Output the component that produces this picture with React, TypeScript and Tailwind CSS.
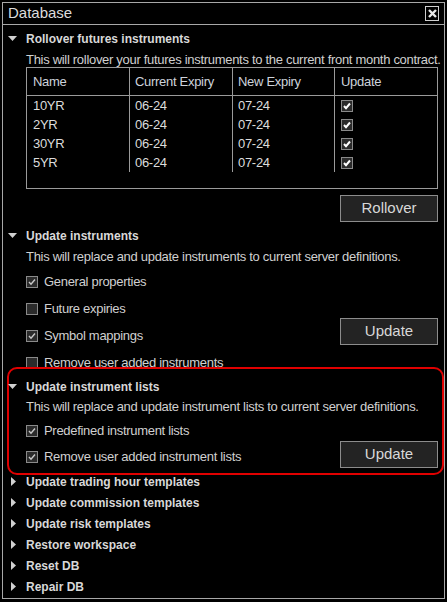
import React from 'react';

const font = { fontFamily: '"Liberation Sans", Arial, sans-serif' };

function DownArrow() {
  return (
    <svg width="9" height="5" viewBox="0 0 9 5" className="block">
      <polygon points="0,0 9,0 4.5,5" fill="#d0d0d0" />
    </svg>
  );
}

function RightArrow() {
  return (
    <svg width="5" height="9" viewBox="0 0 5 9" className="block">
      <polygon points="0,0 5,4.5 0,9" fill="#d0d0d0" />
    </svg>
  );
}

function Check({ checked, bold }: { checked: boolean; bold?: boolean }) {
  return (
    <div className="w-[12px] h-[12px] border border-[#8a8a8a] bg-[#2b2b2b] flex items-center justify-center shrink-0">
      {checked && (
        <svg width="8" height="8" viewBox="0 0 8 8" className="block">
          <polyline
            points="1,4 3,6.2 7,1.5"
            fill="none"
            stroke={bold ? '#ffffff' : '#c8c8c8'}
            strokeWidth={bold ? 2 : 1.4}
          />
        </svg>
      )}
    </div>
  );
}

function Header({ title, open }: { title: string; open: boolean }) {
  return (
    <div className="flex items-center h-[27px]">
      <div className="w-[18px] flex justify-start">{open ? <DownArrow /> : <div className="pl-[3px]"><RightArrow /></div>}</div>
      <span className="text-[12px] font-bold text-[#d8d8d8]">{title}</span>
    </div>
  );
}

function Button({ label }: { label: string }) {
  return (
    <div className="w-[98px] h-[27px] border border-[#8c8c8c] bg-[#232323] flex items-center justify-center text-[15px] text-[#d8d8d8]">
      {label}
    </div>
  );
}

function Option({ label, checked, h }: { label: string; checked: boolean; h: string }) {
  return (
    <div className={`flex items-center gap-[6px] ${h}`}>
      <Check checked={checked} />
      <span className="text-[13px] tracking-[-0.3px] text-[#d0d0d0]">{label}</span>
    </div>
  );
}

const rows = [
  ['10YR', '06-24', '07-24'],
  ['2YR', '06-24', '07-24'],
  ['30YR', '06-24', '07-24'],
  ['5YR', '06-24', '07-24'],
];

export default function App() {
  return (
    <div className="w-[447px] h-[602px] bg-black pt-[2px] pl-[2px]" style={font}>
      <div className="w-[443px] h-[597px] border border-[#a8a8a8] flex flex-col overflow-hidden">
        {/* title bar */}
        <div className="h-[22px] border-b border-[#a8a8a8] flex items-center justify-between pl-[5px] pr-[5px] shrink-0">
          <span className="text-[15px] text-[#dcdcdc]">Database</span>
          <div className="w-[14px] h-[15px] border border-[#cfcfcf] flex items-center justify-center">
            <svg width="9" height="9" viewBox="0 0 9 9" className="block">
              <path d="M1 1 L8 8 M8 1 L1 8" stroke="#e8e8e8" strokeWidth="2.4" />
            </svg>
          </div>
        </div>

        <div className="flex flex-col pl-[5px] pr-[6px]">
          {/* Rollover */}
          <Header title="Rollover futures instruments" open />
          <div className="pl-[18px]">
            <div className="h-[15px] flex items-center text-[13px] tracking-[-0.3px] text-[#d0d0d0] whitespace-nowrap">
              This will rollover your futures instruments to the current front month contract.
            </div>
            <div className="w-[412px] h-[122px] border border-[#9a9a9a] tracking-[-0.3px]">
              <div className="grid grid-cols-[103px_103px_102px_1fr] h-[28px] border-b border-[#9a9a9a] text-[13px] text-[#cdd3dc]">
                <div className="pl-[6px] flex items-center border-r border-[#9a9a9a]">Name</div>
                <div className="pl-[5px] flex items-center border-r border-[#9a9a9a]">Current Expiry</div>
                <div className="pl-[5px] flex items-center border-r border-[#9a9a9a]">New Expiry</div>
                <div className="pl-[6px] flex items-center">Update</div>
              </div>
              <div className="grid grid-cols-[103px_103px_102px_1fr] text-[13px] text-[#dcdcdc]">
                {rows.map((r) => (
                  <React.Fragment key={r[0]}>
                    <div className="h-[19px] pl-[6px] flex items-center border-r border-[#9a9a9a]">{r[0]}</div>
                    <div className="h-[19px] pl-[5px] flex items-center border-r border-[#9a9a9a]">{r[1]}</div>
                    <div className="h-[19px] pl-[5px] flex items-center border-r border-[#9a9a9a]">{r[2]}</div>
                    <div className="h-[19px] pl-[6px] flex items-center">
                      <Check checked bold />
                    </div>
                  </React.Fragment>
                ))}
              </div>
            </div>
          </div>
          <div className="flex justify-end mt-[6px]">
            <Button label="Rollover" />
          </div>

          {/* Update instruments */}
          <Header title="Update instruments" open />
          <div className="pl-[18px]">
            <div className="h-[15px] flex items-center text-[13px] tracking-[-0.3px] text-[#d0d0d0] whitespace-nowrap">
              This will replace and update instruments to current server definitions.
            </div>
            <div className="flex justify-between mt-[4px]">
              <div className="flex flex-col">
                <Option label="General properties" checked h="h-[27px]" />
                <Option label="Future expiries" checked={false} h="h-[27px]" />
                <Option label="Symbol mappings" checked h="h-[27px]" />
                <Option label="Remove user added instruments" checked={false} h="h-[27px]" />
              </div>
              <div className="mt-[50px]">
                <Button label="Update" />
              </div>
            </div>
          </div>
        </div>

        {/* Update instrument lists (highlighted) */}
        <div className="mt-[-9px] mb-[-4px] ml-[4px] mr-0 border-2 border-[#e00000] rounded-[10px] pt-[4px] pb-[3px] pr-[4px]">
          <div className="-ml-[1px]">
            <Header title="Update instrument lists" open />
            <div className="pl-[18px] -mt-[1px]">
              <div className="h-[15px] flex items-center text-[13px] tracking-[-0.3px] text-[#d0d0d0] whitespace-nowrap">
                This will replace and update instrument lists to current server definitions.
              </div>
              <div className="flex justify-between mt-[4px]">
                <div className="flex flex-col">
                  <Option label="Predefined instrument lists" checked h="h-[26px]" />
                  <Option label="Remove user added instrument lists" checked h="h-[26px]" />
                </div>
                <div className="mt-[23px]">
                  <Button label="Update" />
                </div>
              </div>
            </div>
          </div>
        </div>

        {/* collapsed sections */}
        <div className="flex flex-col pl-[5px]">
          {[
            'Update trading hour templates',
            'Update commission templates',
            'Update risk templates',
            'Restore workspace',
            'Reset DB',
            'Repair DB',
          ].map((t) => (
            <div key={t} className="flex items-center h-[21px]">
              <div className="w-[18px] pl-[3px]">
                <RightArrow />
              </div>
              <span className="text-[12px] font-bold text-[#d8d8d8]">{t}</span>
            </div>
          ))}
        </div>
      </div>
    </div>
  );
}
